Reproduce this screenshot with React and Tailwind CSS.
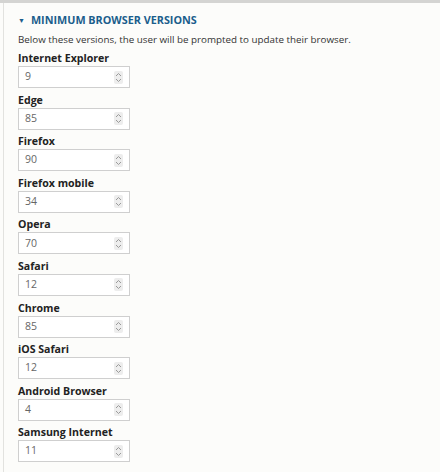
import React from 'react';

const browsers = [
  { name: 'Internet Explorer', value: '9' },
  { name: 'Edge', value: '85' },
  { name: 'Firefox', value: '90' },
  { name: 'Firefox mobile', value: '34' },
  { name: 'Opera', value: '70' },
  { name: 'Safari', value: '12' },
  { name: 'Chrome', value: '85' },
  { name: 'iOS Safari', value: '12' },
  { name: 'Android Browser', value: '4' },
  { name: 'Samsung Internet', value: '11' },
];

const Spinner = () => (
  <span className="flex h-[13px] w-[9px] flex-col items-center justify-center rounded-[2px] bg-[#ededed]">
    <svg width="7" height="11" viewBox="0 0 7 11" fill="none" stroke="#9a9a9a" strokeWidth="1">
      <path d="M1 4 L3.5 1.5 L6 4" />
      <path d="M1 7 L3.5 9.5 L6 7" />
    </svg>
  </span>
);

const App = () => {
  return (
    <div className="h-[472px] w-[440px] overflow-hidden bg-[#fcfcfa] font-['Open_Sans',sans-serif] text-[#333]">
      <div className="h-[3px] bg-[#d4d4d2]" />
      <div className="ml-[3px] h-[469px] border-l border-[#e2e2df] pl-[14px] pt-[10px]">
        <div className="flex items-center gap-[6px] text-[10.8px] font-bold uppercase text-[#1b5e8c]">
          <span className="text-[7px] leading-none">▼</span>
          <span className="leading-[14px]">Minimum browser versions</span>
        </div>
        <p className="mt-[6px] text-[9.8px] leading-[14px] text-[#333]">
          Below these versions, the user will be prompted to update their browser.
        </p>
        <div className="mt-[3px]">
          {browsers.map((b) => (
            <div key={b.name} className="mb-[3.6px]">
              <label className="block text-[10.6px] font-bold leading-[16px] text-[#222]">{b.name}</label>
              <div className="flex h-[22px] w-[112px] items-center justify-between border border-[#cfcfcf] bg-white pl-[6px] pr-[6px]">
                <span className="text-[10.5px] text-[#666]">{b.value}</span>
                <Spinner />
              </div>
            </div>
          ))}
        </div>
      </div>
    </div>
  );
};

export default App;
